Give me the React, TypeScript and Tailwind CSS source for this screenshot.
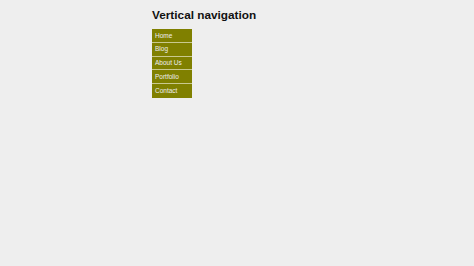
export default function App() {
  const items = ["Home", "Blog", "About Us", "Portfolio", "Contact"];
  return (
    <div className="w-[474px] h-[266px] bg-[#eeeeee] overflow-hidden" style={{ fontFamily: '"Liberation Sans", Arial, sans-serif' }}>
      <div className="pl-[152px] pt-[7px]">
        <h1 className="text-[11.8px] leading-[16px] font-bold text-[#111111] m-0">Vertical navigation</h1>
        <ul className="mt-[6px] w-[40px] bg-[#808000] list-none p-0 m-0">
          {items.map((it, i) => (
            <li key={it} className={`h-[13.8px] flex items-center pl-[3px] text-[6.5px] text-[#eeeeee] ${i < items.length - 1 ? "border-b border-[#c9c98f]" : ""}`}>
              {it}
            </li>
          ))}
        </ul>
      </div>
    </div>
  );
}
